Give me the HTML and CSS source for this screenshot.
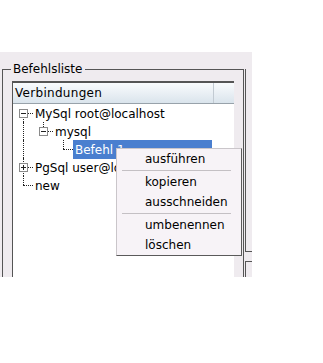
FILE: index.html
```html
<!DOCTYPE html>
<html>
<head>
<meta charset="utf-8">
<link rel="stylesheet" href="styles.css">
</head>
<body>
<div class="screen">
  <div class="panel">
    <fieldset class="group">
      <legend class="group-title">Befehlsliste</legend>
      <div class="tree">
        <div class="thead">
          <div class="th th-main">Verbindungen</div>
          <div class="th th-extra"></div>
        </div>
        <div class="tbody">
          <div class="row">
            <span class="conn first"><svg class="box" width="9" height="9" viewBox="0 0 9 9"><rect x="0.5" y="0.5" width="8" height="8" fill="#fff" stroke="#8a8a8a"/><line x1="2" y1="4.5" x2="7" y2="4.5" stroke="#222"/></svg></span>
            <span class="label">MySql root@localhost</span>
          </div>
          <div class="row">
            <span class="conn pass"></span>
            <span class="conn last"><svg class="box" width="9" height="9" viewBox="0 0 9 9"><rect x="0.5" y="0.5" width="8" height="8" fill="#fff" stroke="#8a8a8a"/><line x1="2" y1="4.5" x2="7" y2="4.5" stroke="#222"/></svg></span>
            <span class="label">mysql</span>
          </div>
          <div class="row">
            <span class="conn pass"></span>
            <span class="conn blank"></span>
            <span class="conn last"></span>
            <span class="label selected">Befehl 1</span>
          </div>
          <div class="row">
            <span class="conn mid"><svg class="box" width="9" height="9" viewBox="0 0 9 9"><rect x="0.5" y="0.5" width="8" height="8" fill="#fff" stroke="#8a8a8a"/><line x1="2" y1="4.5" x2="7" y2="4.5" stroke="#222"/><line x1="4.5" y1="2" x2="4.5" y2="7" stroke="#222"/></svg></span>
            <span class="label">PgSql user@localhost</span>
          </div>
          <div class="row">
            <span class="conn last"></span>
            <span class="label">new</span>
          </div>
        </div>
      </div>
    </fieldset>
    <div class="side">
      <div class="side-box upper"></div>
      <div class="side-box lower"></div>
    </div>
    <div class="menu">
      <div class="item">ausführen</div>
      <div class="sep"></div>
      <div class="item">kopieren</div>
      <div class="item">ausschneiden</div>
      <div class="sep"></div>
      <div class="item">umbenennen</div>
      <div class="item">löschen</div>
    </div>
  </div>
</div>
</body>
</html>
```

FILE: styles.css
```css
html, body {
  margin: 0;
  padding: 0;
  background: #ffffff;
}
body {
  font-family: "DejaVu Sans", "Bitstream Vera Sans", sans-serif;
  font-size: 12px;
  color: #000;
}
.screen {
  padding-top: 52px;
}
.panel {
  position: relative;
  display: flex;
  align-items: flex-start;
  width: 252px;
  height: 225px;
  overflow: hidden;
  background: #efebef;
}
.group {
  box-sizing: border-box;
  flex: none;
  width: 242px;
  height: 320px;
  margin: 10px 0 0 2px;
  padding: 5px 9px 0 9px;
  border: 1px solid #555;
  min-inline-size: 0;
}
.group-title {
  margin-left: -1px;
  padding: 0 3px 0 2px;
  line-height: 14px;
  height: 14px;
}
.tree {
  height: 300px;
  background: #fff;
  border-top: 2px solid #555;
  border-left: 1px solid #555;
}
.thead {
  display: flex;
  height: 20px;
  border-bottom: 1px solid #98a2aa;
  background: linear-gradient(#f9fbfd, #dae4ec);
}
.th {
  box-sizing: border-box;
  line-height: 21px;
}
.th-main {
  width: 201px;
  padding-left: 2px;
  border-right: 1px solid #c2cad2;
  letter-spacing: 0.3px;
}
.th-extra {
  flex: 1;
}
.row {
  display: flex;
  height: 18px;
}
.conn {
  position: relative;
  display: block;
  flex: none;
  width: 20px;
  height: 18px;
}
.conn::before {
  content: "";
  position: absolute;
  left: 10px;
  border-left: 1px dotted #222;
}
.conn::after {
  content: "";
  position: absolute;
  left: 10px;
  right: 0;
  top: 9px;
  border-top: 1px dotted #222;
}
.conn.first::before { top: 9px; bottom: 0; }
.conn.mid::before { top: 0; bottom: 0; }
.conn.last::before { top: 0; height: 9px; }
.conn.pass::before { top: 0; bottom: 0; }
.conn.pass::after,
.conn.blank::after,
.conn.blank::before { display: none; }
.box {
  position: relative;
  z-index: 1;
  display: block;
  margin: 5px 0 0 6px;
}
.label {
  box-sizing: border-box;
  height: 19px;
  line-height: 20px;
  padding: 0 2px;
  white-space: nowrap;
}
.label.selected {
  width: 139px;
  background: #4a7fcf;
  color: #fff;
}
.side {
  flex: none;
  width: 7px;
  margin: 17px 0 0 1px;
}
.side-box {
  border-left: 1px solid #555;
}
.side-box.upper {
  height: 182px;
  border-bottom: 1px solid #555;
}
.side-box.lower {
  height: 100px;
  margin-top: 9px;
  border-top: 1px solid #555;
}
.menu {
  position: absolute;
  left: 116px;
  top: 96px;
  box-sizing: border-box;
  width: 126px;
  background: #f7f3f7;
  border: 1px solid;
  border-color: #cac6ca #5a5a5a #5a5a5a #cac6ca;
}
.item {
  height: 20px;
  line-height: 20px;
  padding-left: 28px;
  white-space: nowrap;
}
.sep {
  height: 1px;
  margin: 1px 10px 1px 5px;
  background: #c4c0c4;
}
```
